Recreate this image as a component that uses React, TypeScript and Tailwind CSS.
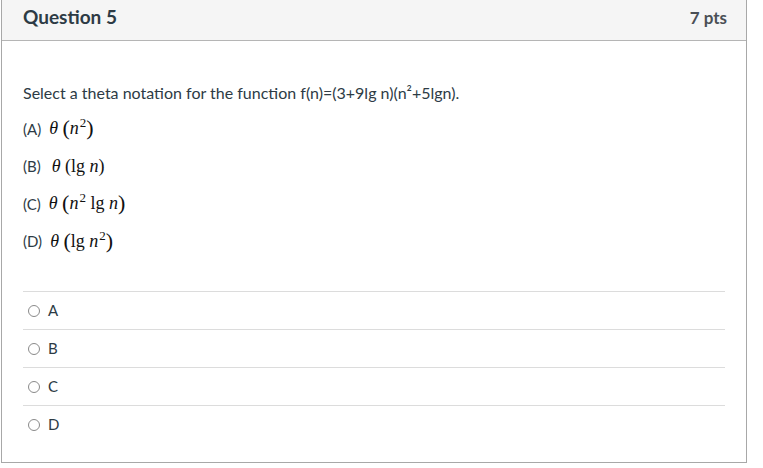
import React from "react";

function M({ children }: { children: React.ReactNode }) {
  return (
    <span className="font-['Liberation_Serif','DejaVu_Serif',serif] text-[18px] text-[#111] whitespace-nowrap">
      {children}
    </span>
  );
}

function I({ children }: { children: React.ReactNode }) {
  return <span className="italic">{children}</span>;
}

function P({ children }: { children: React.ReactNode }) {
  return <span className="text-[22px] leading-none relative top-[1px]">{children}</span>;
}

function Sup({ children }: { children: React.ReactNode }) {
  return <span className="text-[13px] relative -top-[7px] ml-[1px]">{children}</span>;
}

function Option({ label, children }: { label: string; children: React.ReactNode }) {
  return (
    <div className="flex items-center h-[37.5px]">
      <span className="text-[15px] text-[#2d3b45] mr-[8px]">{label}</span>
      <M>{children}</M>
    </div>
  );
}

function Answer({ letter }: { letter: string }) {
  return (
    <div className="flex items-center h-[38px] border-t border-[#dcdcdc] pl-[5px]">
      <span className="w-[12px] h-[12px] rounded-full border border-[#8a8a8a] bg-white"></span>
      <span className="ml-[8px] text-[15px] text-[#2d3b45]">{letter}</span>
    </div>
  );
}

export default function App() {
  return (
    <div className="w-[763px] h-[468px] bg-white font-['Lato',sans-serif]">
      <div className="ml-[1px] w-[746px] h-[463px] border-l border-r border-b border-[#a8a8a8] flex flex-col">
        <div className="h-[41px] bg-[#f5f5f5] border-b border-[#b5b5b5] flex items-center justify-between pl-[21px] pr-[19px] pb-[5px]">
          <span className="text-[19px] font-bold text-[#2d3b45]">Question 5</span>
          <span className="text-[17px] font-bold text-[#4a4f55]">7 pts</span>
        </div>
        <div className="px-[21px] flex flex-col">
          <div className="mt-[41px] text-[16px] text-[#2d3b45] leading-[22px]">
            Select a theta notation for the function f(n)=(3+9lg n)(n²+5lgn).
          </div>
          <div className="mt-[6px] flex flex-col">
            <Option label="(A)">
              <I>θ</I> <P>(</P>
              <I>n</I>
              <Sup>2</Sup>
              <P>)</P>
            </Option>
            <Option label="(B)">
              <span className="ml-[3px]"></span>
              <I>θ</I> (lg <I>n</I>)
            </Option>
            <Option label="(C)">
              <I>θ</I> <P>(</P>
              <I>n</I>
              <Sup>2</Sup> lg <I>n</I>
              <P>)</P>
            </Option>
            <Option label="(D)">
              <I>θ</I> <P>(</P>lg <I>n</I>
              <Sup>2</Sup>
              <P>)</P>
            </Option>
          </div>
          <div className="mt-[31px] flex flex-col">
            <Answer letter="A" />
            <Answer letter="B" />
            <Answer letter="C" />
            <Answer letter="D" />
          </div>
        </div>
      </div>
    </div>
  );
}
